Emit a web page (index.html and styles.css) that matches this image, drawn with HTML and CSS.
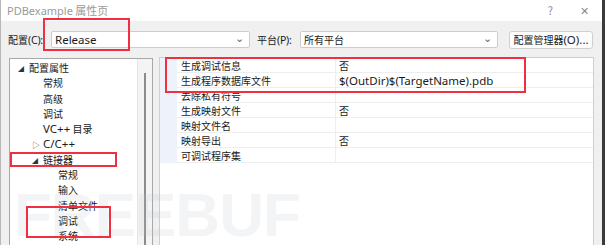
FILE: index.html
```html
<!DOCTYPE html>
<html lang="zh-CN">
<head>
  <meta charset="UTF-8" />
  <title>PDBexample 属性页</title>
  <link rel="stylesheet" href="styles.css">
</head>
<body>
  <div class="dialog">
    <div class="titlebar">
      <span class="title"><span class="en">PDBexample</span> 属性页</span>
      <span class="title-btns"><span class="help">?</span><span class="close">✕</span></span>
    </div>

    <div class="config-row">
      <span class="label">配置<span class="en">(C):</span></span>
      <div class="combo combo-config"><span class="en">Release</span><span class="chev">⌄</span></div>
      <span class="label label-plat">平台<span class="en">(P):</span></span>
      <div class="combo combo-plat"><span>所有平台</span><span class="chev">⌄</span></div>
      <button class="btn">配置管理器<span class="en">(O)...</span></button>
    </div>

    <div class="main">
      <div class="tree">
        <ul class="tree-list">
          <li class="lvl0"><span class="arrow open">◢</span>配置属性</li>
          <li class="lvl1">常规</li>
          <li class="lvl1">高级</li>
          <li class="lvl1">调试</li>
          <li class="lvl1"><span class="en">VC++</span> 目录</li>
          <li class="lvl1 has-arrow"><span class="arrow closed">▷</span><span class="en">C/C++</span></li>
          <li class="lvl1 has-arrow"><span class="arrow open">◢</span>链接器</li>
          <li class="lvl2">常规</li>
          <li class="lvl2">输入</li>
          <li class="lvl2">清单文件</li>
          <li class="lvl2">调试</li>
          <li class="lvl2">系统</li>
        </ul>
        <div class="scroll"><div class="thumb"></div></div>
      </div>

      <div class="grid">
        <div class="row"><span class="cat"></span><span class="name">生成调试信息</span><span class="val">否</span></div>
        <div class="row"><span class="cat"></span><span class="name">生成程序数据库文件</span><span class="val"><span class="en">$(OutDir)$(TargetName).pdb</span></span></div>
        <div class="row"><span class="cat"></span><span class="name">去除私有符号</span><span class="val"></span></div>
        <div class="row"><span class="cat"></span><span class="name">生成映射文件</span><span class="val">否</span></div>
        <div class="row"><span class="cat"></span><span class="name">映射文件名</span><span class="val"></span></div>
        <div class="row"><span class="cat"></span><span class="name">映射导出</span><span class="val">否</span></div>
        <div class="row"><span class="cat"></span><span class="name">可调试程序集</span><span class="val"></span></div>
      </div>
    </div>
  </div>

  <div class="watermark">FREEBUF</div>

  <div class="mark mark-release"></div>
  <div class="mark mark-props"></div>
  <div class="mark mark-linker"></div>
  <div class="mark mark-debug"></div>
</body>
</html>
```

FILE: styles.css
```css
body {
  margin: 0;
  width: 605px;
  height: 245px;
  overflow: hidden;
  position: relative;
  font-family: "Noto Sans CJK SC", "Noto Sans", sans-serif;
  font-size: 10px;
  line-height: 15px;
  color: #1a1a1a;
  background: #f0f0f0;
}
.en {
  font-family: "Noto Sans", "Noto Sans CJK SC", sans-serif;
  font-size: 11.5px;
}
.dialog {
  width: 605px;
  height: 245px;
  border-left: 1px solid #b8b8b8;
  border-right: 3px solid #3a3a3a;
  background: #f0f0f0;
  box-sizing: border-box;
}
.titlebar {
  height: 21px;
  background: #ffffff;
  display: flex;
  justify-content: space-between;
  align-items: center;
  padding: 0 13px 0 6px;
}
.title {
  color: #9a9a9a;
  font-size: 11px;
}
.title .en {
  font-size: 11px;
}
.title-btns {
  display: flex;
  gap: 27px;
  color: #8a8a8a;
  font-size: 11px;
}
.config-row {
  height: 36px;
  display: flex;
  align-items: center;
  padding-left: 7px;
  padding-top: 1px;
  box-sizing: border-box;
  white-space: nowrap;
}
.label {
  width: 43px;
  flex-shrink: 0;
}
.label .en {
  font-size: 10.5px;
  letter-spacing: -0.2px;
}
.label-plat {
  margin-left: 7px;
  width: 43px;
}
.combo {
  height: 17px;
  background: #ffffff;
  border: 1px solid #cdcdcd;
  border-radius: 2px;
  display: flex;
  justify-content: space-between;
  align-items: center;
  padding: 0 5px 0 3px;
  box-sizing: border-box;
  flex-shrink: 0;
}
.combo-config {
  width: 199px;
}
.combo-plat {
  width: 198px;
}
.chev {
  color: #666;
  font-size: 11px;
  line-height: 1;
  margin-top: -5px;
}
.btn {
  margin-left: 11px;
  height: 18px;
  width: 84px;
  padding: 0;
  font: inherit;
  line-height: 15px;
  white-space: nowrap;
  color: #1a1a1a;
  background: #fdfdfd;
  border: 1px solid #d0d0d0;
  border-radius: 3px;
  flex-shrink: 0;
}
.main {
  display: flex;
  gap: 6px;
  padding-left: 8px;
}
.tree {
  width: 144px;
  height: 188px;
  background: #ffffff;
  border: 1px solid #a8a8a8;
  border-bottom: none;
  box-sizing: border-box;
  display: flex;
  margin-top: 1px;
}
.tree-list {
  list-style: none;
  margin: 0;
  padding: 1px 0 0 0;
  flex: 1;
}
.tree-list li {
  height: 15.3px;
  line-height: 15px;
  white-space: nowrap;
}
.lvl0 {
  padding-left: 8px;
}
.lvl1 {
  padding-left: 33px;
}
.lvl1.has-arrow {
  padding-left: 22px;
}
.lvl2 {
  padding-left: 48px;
}
.arrow {
  display: inline-block;
  width: 11px;
  font-size: 6px;
  color: #333;
  vertical-align: 1px;
}
.arrow.closed {
  font-size: 8px;
  color: #555;
  vertical-align: 0;
}
.scroll {
  width: 14px;
  background: #f4f4f4;
  border-left: 1px solid #e4e4e4;
  display: flex;
  justify-content: center;
  padding-top: 14px;
}
.thumb {
  width: 2px;
  background: #8c8c8c;
  height: 100%;
}
.grid {
  width: 435px;
  height: 188px;
  background: #ffffff;
  border: 1px solid #cfcfcf;
  border-bottom: none;
  box-sizing: border-box;
}
.row {
  display: flex;
  height: 15px;
}
.cat {
  width: 17px;
  background: #eef3fb;
}
.name {
  width: 159px;
  padding-left: 4px;
  border-bottom: 1px solid #eeeeee;
  border-right: 1px solid #eeeeee;
  box-sizing: border-box;
}
.val {
  flex: 1;
  padding-left: 3px;
  border-bottom: 1px solid #eeeeee;
  box-sizing: border-box;
}
.watermark {
  position: absolute;
  left: 14px;
  top: 180px;
  white-space: nowrap;
  font-family: "Liberation Sans", sans-serif;
  font-weight: bold;
  font-size: 62px;
  line-height: 70px;
  letter-spacing: -1px;
  color: rgba(190, 195, 205, 0.18);
  pointer-events: none;
}
.mark {
  position: absolute;
  border: 2px solid #ee3040;
  box-sizing: border-box;
}
.mark-release {
  left: 43px;
  top: 18px;
  width: 87px;
  height: 33px;
}
.mark-props {
  left: 165px;
  top: 57px;
  width: 361px;
  height: 36px;
}
.mark-linker {
  left: 10px;
  top: 152px;
  width: 107px;
  height: 15px;
}
.mark-debug {
  left: 26px;
  top: 206px;
  width: 85px;
  height: 32px;
}
```
